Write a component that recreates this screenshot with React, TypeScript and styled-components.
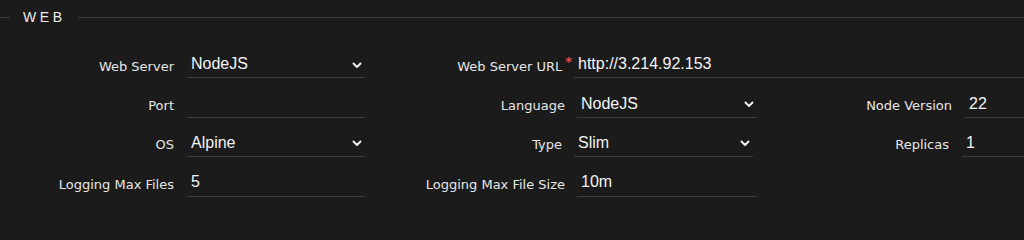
import React from "react";
import styled, { createGlobalStyle } from "styled-components";

const GlobalStyle = createGlobalStyle`
  html, body {
    margin: 0;
    padding: 0;
    background: #1b1b1b;
  }
  body {
    font-family: "DejaVu Sans", sans-serif;
    overflow: hidden;
  }
`;

const Section = styled.section`
  width: 1024px;
  height: 240px;
  background: #1b1b1b;
  overflow: hidden;
`;

const Legend = styled.div`
  display: flex;
  align-items: center;
  height: 34px;

  &::before {
    content: "";
    width: 10px;
    height: 1px;
    background: #3a3a3a;
  }

  &::after {
    content: "";
    flex: 1;
    height: 1px;
    background: #3a3a3a;
  }
`;

const LegendText = styled.span`
  padding: 0 12px 0 13px;
  font-family: "Liberation Sans", Arial, sans-serif;
  font-size: 14px;
  letter-spacing: 3.6px;
  color: #ececec;
`;

const Form = styled.div`
  display: flex;
  flex-direction: column;
  gap: 10px;
  padding-top: 15px;
`;

const Row = styled.div`
  display: flex;
  align-items: center;
  height: 29.4px;
  white-space: nowrap;
`;

const Field = styled.div<{ $shift?: number; $grow?: boolean }>`
  display: flex;
  align-items: center;
  height: 100%;
  margin-left: ${(p) => p.$shift ?? 0}px;
  flex: ${(p) => (p.$grow ? 1 : "none")};
`;

const Label = styled.label<{ $width: number; $gap: number }>`
  width: ${(p) => p.$width}px;
  margin-right: ${(p) => p.$gap}px;
  padding-top: 5px;
  text-align: right;
  font-size: 13px;
  color: #e6e6e6;
`;

const Required = styled.span`
  position: relative;
  top: -5px;
  margin-left: 3px;
  font-family: "DejaVu Sans", sans-serif;
  font-size: 13px;
  font-weight: bold;
  color: #f0484e;
`;

const Input = styled.div<{ $width?: number }>`
  box-sizing: border-box;
  display: flex;
  align-items: center;
  justify-content: space-between;
  width: ${(p) => (p.$width ? `${p.$width}px` : "auto")};
  flex: ${(p) => (p.$width ? "none" : 1)};
  height: 29.4px;
  padding: 2px 3px 0 4px;
  border-bottom: 1px solid #3c3c3c;
  font-family: "Liberation Sans", Arial, sans-serif;
  font-size: 16px;
  color: #f4f4f4;
`;

const Chevron = () => (
  <svg width="10" height="7" viewBox="0 0 10 7" style={{ marginTop: 2 }}>
    <polyline
      points="1.5,1.5 5,5 8.5,1.5"
      fill="none"
      stroke="#f0f0f0"
      strokeWidth="2"
      strokeLinecap="round"
      strokeLinejoin="round"
    />
  </svg>
);

type FieldProps = {
  label: string;
  value?: string;
  select?: boolean;
  required?: boolean;
  labelWidth: number;
  gap: number;
  inputWidth?: number;
  shift?: number;
  grow?: boolean;
};

const FormField: React.FC<FieldProps> = ({
  label,
  value,
  select,
  required,
  labelWidth,
  gap,
  inputWidth,
  shift,
  grow,
}) => (
  <Field $shift={shift} $grow={grow}>
    <Label $width={labelWidth} $gap={gap}>
      {label}
      {required && <Required>*</Required>}
    </Label>
    <Input $width={inputWidth}>
      <span>{value}</span>
      {select && <Chevron />}
    </Input>
  </Field>
);

const App: React.FC = () => {
  return (
    <>
      <GlobalStyle />
      <Section>
        <Legend>
          <LegendText>WEB</LegendText>
        </Legend>
        <Form>
          <Row>
            <FormField label="Web Server" value="NodeJS" select labelWidth={174} gap={13} inputWidth={178} />
            <FormField
              label="Web Server URL"
              value="http://3.214.92.153"
              required
              labelWidth={207}
              gap={2}
              grow
            />
          </Row>
          <Row>
            <FormField label="Port" labelWidth={174} gap={13} inputWidth={178} />
            <FormField label="Language" value="NodeJS" select labelWidth={197} gap={12} inputWidth={180} shift={3} />
            <FormField label="Node Version" value="22" labelWidth={195} gap={13} inputWidth={120} />
          </Row>
          <Row>
            <FormField label="OS" value="Alpine" select labelWidth={174} gap={13} inputWidth={178} />
            <FormField label="Type" value="Slim" select labelWidth={197} gap={12} inputWidth={179} />
            <FormField label="Replicas" value="1" labelWidth={196} gap={13} inputWidth={120} />
          </Row>
          <Row>
            <FormField label="Logging Max Files" value="5" labelWidth={174} gap={13} inputWidth={178} />
            <FormField label="Logging Max File Size" value="10m" labelWidth={197} gap={12} inputWidth={180} shift={3} />
          </Row>
        </Form>
      </Section>
    </>
  );
};

export default App;
